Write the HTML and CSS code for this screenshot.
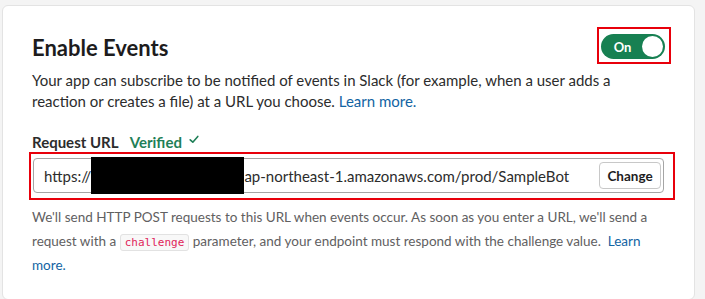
FILE: index.html
```html
<!DOCTYPE html>
<html lang="en">
<head>
    <meta charset="UTF-8">
    <meta name="viewport" content="width=device-width, initial-scale=1.0">
    <title>Event Subscriptions</title>
    <link rel="stylesheet" href="styles.css">
</head>
<body>
    <div class="card">
        <div class="header">
            <h2>Enable Events</h2>
            <div class="mark mark-toggle">
                <button class="toggle" type="button">
                    <span class="toggle-text">On</span>
                    <span class="knob"></span>
                </button>
            </div>
        </div>
        <p class="desc">Your app can subscribe to be notified of events in Slack (for example, when a user adds a reaction or creates a file) at a URL you choose. <a href="#">Learn more.</a></p>

        <div class="label">
            Request URL
            <span class="verified">Verified
                <svg width="10" height="9" viewBox="0 0 10 9"><path d="M1.2 4.8 L3.8 7.2 L8.8 1.4" fill="none" stroke="#1f7f57" stroke-width="1.6" stroke-linecap="round" stroke-linejoin="round"/></svg>
            </span>
        </div>
        <div class="mark mark-url">
            <div class="url-input">
                <span class="url-text">https://<span class="redacted"></span>ap-northeast-1.amazonaws.com/prod/SampleBot</span>
                <button class="btn-change" type="button">Change</button>
            </div>
        </div>

        <p class="help">We'll send HTTP POST requests to this URL when events occur. As soon as you enter a URL, we'll send a request with a <code>challenge</code> parameter, and your endpoint must respond with the challenge value. &nbsp;<a href="#">Learn more.</a></p>
    </div>
</body>
</html>
```

FILE: styles.css
```css
body {
    margin: 0;
    background-color: #f4f4f4;
    font-family: Lato, "Noto Sans", sans-serif;
    color: #1d1c1d;
    overflow: hidden;
}
a {
    color: #1264a3;
    text-decoration: none;
}
.card {
    margin: 5px 10px 0 2px;
    height: 295px;
    box-sizing: border-box;
    background: #fff;
    border: 1px solid #e3e3e3;
    border-radius: 6px;
    padding: 21px 29px 0 29px;
}
.header {
    display: flex;
    justify-content: space-between;
    align-items: flex-start;
}
.header h2 {
    margin: 7px 0 0 0;
    font-size: 22px;
    line-height: 28px;
    font-weight: 700;
}
.mark {
    border: 2px solid #e8000b;
}
.mark-toggle {
    padding: 5px 4px 3px 2px;
    margin-right: -6px;
}
.toggle {
    display: flex;
    align-items: center;
    width: 64px;
    height: 25px;
    padding: 0 2px 0 0;
    border: none;
    border-radius: 13px;
    background-color: #178052;
    cursor: pointer;
}
.toggle-text {
    flex: 1;
    color: #fff;
    font-family: Lato, sans-serif;
    font-weight: 700;
    font-size: 13px;
    text-align: center;
    padding-left: 2px;
}
.knob {
    width: 21px;
    height: 21px;
    border-radius: 50%;
    background: #fff;
}
.desc {
    margin: 6px 0 0 0;
    font-size: 15px;
    line-height: 21px;
    color: #2c2c2c;
}
.label {
    margin-top: 20px;
    font-size: 15px;
    line-height: 20px;
    font-weight: 700;
    color: #2c2c2c;
}
.verified {
    color: #1f7f57;
    margin-left: 8px;
}
.verified svg {
    margin-left: 3px;
    vertical-align: 4px;
}
.mark-url {
    margin: 0 -10px 0 -3px;
    padding: 4px 9px 5px 2px;
}
.url-input {
    display: flex;
    align-items: center;
    justify-content: space-between;
    height: 35px;
    box-sizing: border-box;
    border: 1px solid #a5a5a5;
    border-radius: 4px;
    padding: 0 2px 0 10px;
}
.url-text {
    font-size: 15px;
    color: #2c2c2c;
    display: flex;
    align-items: center;
}
.redacted {
    display: inline-block;
    width: 153px;
    height: 37px;
    background: #000;
}
.btn-change {
    height: 27px;
    width: 62px;
    padding: 0;
    background: #fff;
    border: 1px solid #c8c8c8;
    border-radius: 4px;
    font-family: Lato, sans-serif;
    font-weight: 700;
    font-size: 13.5px;
    color: #1d1c1d;
}
.help {
    margin: 5px 0 0 0;
    font-size: 13.5px;
    line-height: 24px;
    color: #616061;
}
.help code {
    font-family: "DejaVu Sans Mono", monospace;
    font-size: 11px;
    line-height: 1;
    color: #e01e5a;
    background: #f8f8f8;
    border: 1px solid #e2e2e2;
    border-radius: 3px;
    padding: 1px 4px;
}
```
